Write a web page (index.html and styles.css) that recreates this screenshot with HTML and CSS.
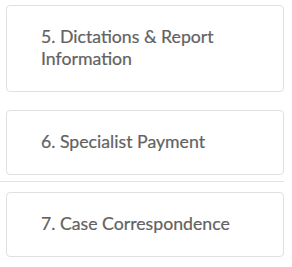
FILE: index.html
```html
<!DOCTYPE html>
<html lang="en">
<head>
    <meta charset="UTF-8">
    <meta name="viewport" content="width=device-width, initial-scale=1.0">
    <title>Case Steps</title>
    <link rel="stylesheet" href="styles.css">
</head>
<body>
    <div class="step-list">
        <div class="step-item">
            <div class="step-card">5. Dictations &amp; Report Information</div>
        </div>
        <div class="step-item divided">
            <div class="step-card">6. Specialist Payment</div>
        </div>
        <div class="step-item">
            <div class="step-card">7. Case Correspondence</div>
        </div>
    </div>
</body>
</html>
```

FILE: styles.css
```css
html, body {
    margin: 0;
    padding: 0;
    background: #fff;
}

.step-list {
    width: 284px;
    padding-top: 5px;
    font-family: Lato, "Liberation Sans", sans-serif;
}

.step-item {
    margin-bottom: 18px;
}

.step-item.divided {
    border-bottom: 1px solid #e3e3e3;
    padding-bottom: 6px;
    margin-bottom: 10px;
}

.step-card {
    margin-left: 6px;
    border: 1px solid #e0e0e0;
    border-radius: 4px;
    padding: 20px 34px 21px;
    font-size: 17.7px;
    line-height: 22px;
    color: #626262;
    -webkit-text-stroke: 0.2px #626262;
}
```
